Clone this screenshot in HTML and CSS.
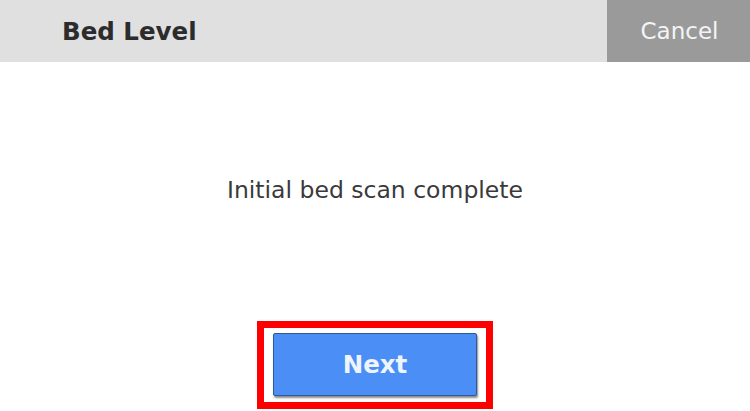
FILE: index.html
```html
<!DOCTYPE html>
<html>
<head>
<meta charset="utf-8">
<link rel="stylesheet" href="styles.css">
</head>
<body>
<div class="screen">
  <header class="topbar">
    <div class="title">Bed Level</div>
    <div class="cancel">Cancel</div>
  </header>
  <main class="content">
    <p class="message">Initial bed scan complete</p>
    <div class="highlight">
      <button class="next">Next</button>
    </div>
  </main>
</div>
</body>
</html>
```
FILE: styles.css
```css
html, body {
  margin: 0;
  padding: 0;
  background: #ffffff;
}
.screen {
  width: 750px;
  height: 411px;
  overflow: hidden;
  display: flex;
  flex-direction: column;
  font-family: "DejaVu Sans", sans-serif;
}
.topbar {
  height: 62px;
  display: flex;
  background: #e0e0e0;
}
.title {
  flex: 1;
  display: flex;
  align-items: center;
  padding-left: 62px;
  font-size: 24.5px;
  font-weight: bold;
  color: #2c2c2c;
}
.cancel {
  width: 143px;
  display: flex;
  align-items: center;
  justify-content: center;
  padding-left: 2px;
  box-sizing: border-box;
  background: #9a9a9a;
  color: #f4f4f4;
  font-size: 23px;
}
.content {
  flex: 1;
  display: flex;
  flex-direction: column;
  align-items: center;
}
.message {
  margin: 114px 0 0 0;
  font-size: 23.5px;
  line-height: 28px;
  color: #3a3a3a;
}
.highlight {
  margin-top: 117px;
  border: 7px solid #ff0000;
  padding: 5px 9px 6px 9px;
  background: #ffffff;
}
.next {
  display: block;
  width: 204px;
  height: 63px;
  margin: 0;
  background: #4b8ff6;
  border: 1px solid #2d5a96;
  border-radius: 2px;
  box-shadow: 1px 2px 2px rgba(0, 0, 0, 0.45);
  color: #eef5ff;
  font-family: "DejaVu Sans", sans-serif;
  font-size: 24.5px;
  font-weight: bold;
  padding: 0;
}
```
